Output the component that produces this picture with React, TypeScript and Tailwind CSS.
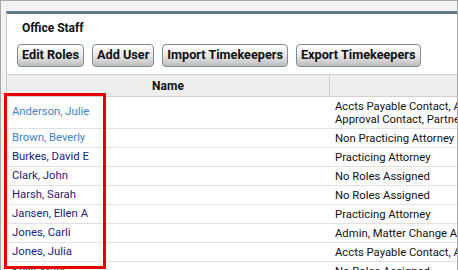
const staff = [
  { name: 'Anderson, Julie', visited: true, roles: 'Accts Payable Contact, Admin, Approval Contact, Partner', tall: true },
  { name: 'Brown, Beverly', visited: true, roles: 'Non Practicing Attorney' },
  { name: 'Burkes, David E', roles: 'Practicing Attorney' },
  { name: 'Clark, John', roles: 'No Roles Assigned' },
  { name: 'Harsh, Sarah', roles: 'No Roles Assigned' },
  { name: 'Jansen, Ellen A', roles: 'Practicing Attorney' },
  { name: 'Jones, Carli', roles: 'Admin, Matter Change Approver' },
  { name: 'Jones, Julia', roles: 'Accts Payable Contact, Approval Contact' },
  { name: 'Kelly, Mark', roles: 'No Roles Assigned' },
]

const buttons = ['Edit Roles', 'Add User', 'Import Timekeepers', 'Export Timekeepers']

export default function App() {
  return (
    <div
      className="relative w-[458px] h-[270px] overflow-hidden bg-[#f2f2f2] border-l border-t border-r border-[#a6a6a6] pl-[5px] pt-[10px]"
      style={{ fontFamily: 'Roboto, "Liberation Sans", sans-serif' }}
    >
      <div className="w-[451px] h-[300px] bg-white border-t-[3px] border-[#5f7a89] border-l border-l-[#c9c9c9]">
        <div className="pl-[15px] pt-[7px] h-[22px] text-[12px] font-bold text-[#111] leading-[14px]">Office Staff</div>
        <div className="flex gap-2 pl-[10px] pt-[8px]">
          {buttons.map((b) => (
            <button
              key={b}
              className="h-[23px] px-[4px] rounded-[4px] border border-[#7d8c99] bg-gradient-to-b from-white via-[#e9e9e9] to-[#bdbdbd] text-[12.7px] font-bold text-[#111] leading-none whitespace-nowrap"
            >
              {b}
            </button>
          ))}
        </div>
        <div className="mt-[7px] flex h-[23px] bg-[#eeeeee] border-t border-b border-[#d0d0d0]">
          <div className="w-[322px] shrink-0 flex items-center justify-center text-[12px] font-bold text-[#111]">Name</div>
          <div className="flex-1 border-l border-[#d0d0d0]"></div>
        </div>
        {staff.map((s) => (
          <div key={s.name} className={`flex border-b border-[#e2e2e2] ${s.tall ? 'h-[32px]' : 'h-[19px]'}`}>
            <div
              className={`w-[322px] shrink-0 pl-[5px] flex items-center text-[11.3px] whitespace-nowrap ${s.visited ? 'text-[#3d84c6]' : 'text-[#1c1c78]'}`}
            >
              {s.name}
            </div>
            <div className="flex-1 min-w-0 pl-[6px] flex items-center overflow-hidden">
              <div
                className={`shrink-0 text-[11.3px] leading-[13px] text-[#111] ${s.tall ? 'w-[175px]' : 'whitespace-nowrap'}`}
              >
                {s.roles}
              </div>
            </div>
          </div>
        ))}
      </div>
      <div className="absolute left-[3px] top-[92px] w-[102px] h-[176px] border-[3px] border-[#e60000]"></div>
    </div>
  )
}
